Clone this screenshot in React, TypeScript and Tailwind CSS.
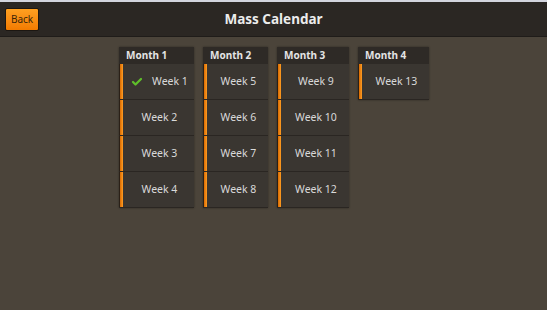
import { Check } from 'lucide-react';

const MONTHS = [
  { name: 'Month 1', width: 'w-[75px]', weeks: [1, 2, 3, 4] },
  { name: 'Month 2', width: 'w-[65px]', weeks: [5, 6, 7, 8] },
  { name: 'Month 3', width: 'w-[72px]', weeks: [9, 10, 11, 12] },
  { name: 'Month 4', width: 'w-[71px]', weeks: [13] },
];

const DONE = [1];

export default function App() {
  return (
    <div className="w-[547px] h-[310px] bg-[#4b443a] flex flex-col overflow-hidden" style={{ fontFamily: '"Noto Sans", "Open Sans", sans-serif' }}>
      <div className="h-[2px] bg-[#d3d5de]" />
      <div className="h-[35px] bg-[#2b2723] border-b border-[#1f1c19] relative flex items-center justify-center">
        <button className="absolute left-[5px] top-[6px] w-[34px] h-[23px] rounded-[2px] bg-gradient-to-b from-[#ffa020] to-[#f27b00] border border-[#1c1712] text-[10px] text-[#3b2508] flex items-center justify-center">
          Back
        </button>
        <h1 className="text-[13.5px] font-bold text-[#ececec]">Mass Calendar</h1>
      </div>

      <div className="flex items-start gap-[9px] pl-[119px] pt-[10px]">
        {MONTHS.map(m => (
          <div key={m.name} className={`${m.width} bg-[#3a3631] shadow-[0_0_2px_rgba(0,0,0,0.4)]`}>
            <div className="h-[17px] bg-[#2e2a26] text-[10px] font-bold text-[#e4e4e4] pl-[7px] flex items-center">
              {m.name}
            </div>
            {m.weeks.map(w => (
              <div key={w} className="h-[36px] flex border-b border-[#2a2622]">
                <div className="w-[4px] bg-gradient-to-r from-[#d86a00] to-[#ff9d22] border-l border-[#2a2017]" />
                <div className="flex-1 flex items-center justify-center gap-[9px] text-[10.5px] text-[#d9d9d9] pl-[2px]">
                  {DONE.includes(w) && <Check className="w-[12px] h-[12px] text-[#5fbf2a]" strokeWidth={4.5} />}
                  <span>Week {w}</span>
                </div>
              </div>
            ))}
          </div>
        ))}
      </div>
    </div>
  );
}
